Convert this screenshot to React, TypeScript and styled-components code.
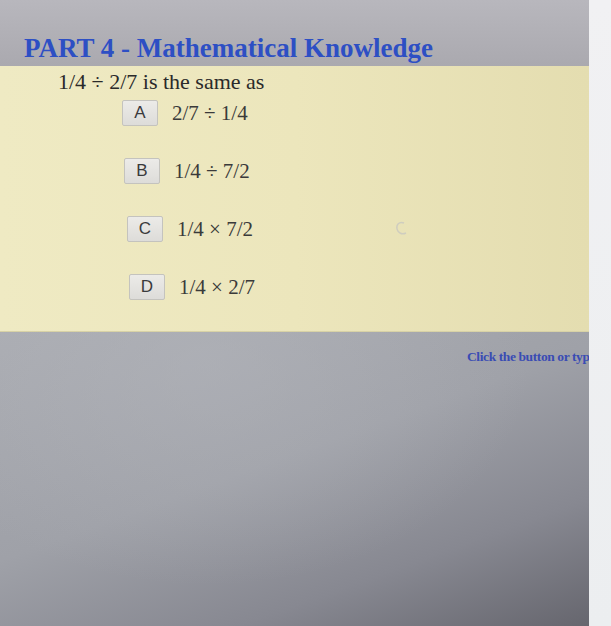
import React from "react";
import styled, { createGlobalStyle } from "styled-components";

const Global = createGlobalStyle`
  html, body { margin: 0; padding: 0; background: #eef0f2; }
  body { width: 611px; height: 626px; overflow: hidden; }
`;

const Page = styled.div`
  display: flex;
  width: 611px;
  height: 626px;
`;

const Main = styled.div`
  width: 589px;
  display: flex;
  flex-direction: column;
  overflow: hidden;
`;

const Side = styled.div`
  flex: 1;
  background: linear-gradient(180deg, #f1f1f3 0%, #eceef0 100%);
`;

const Header = styled.div`
  height: 66px;
  box-sizing: border-box;
  padding: 33px 0 0 24px;
  background: linear-gradient(180deg, #b8b7bd 0%, #aaa9af 100%);
`;

const Title = styled.h1`
  margin: 0;
  font-family: "Liberation Serif", "Times New Roman", serif;
  font-weight: bold;
  font-size: 27px;
  line-height: 30px;
  color: #2d4fc4;
  white-space: nowrap;
`;

const Panel = styled.div`
  height: 266px;
  box-sizing: border-box;
  padding: 3px 0 0 58px;
  background: linear-gradient(90deg, #efeac3 0%, #ece6bc 50%, #e4ddb0 100%);
  border-bottom: 1px solid #d8d2a6;
`;

const Question = styled.div`
  font-family: "Liberation Serif", "Times New Roman", serif;
  font-size: 22px;
  line-height: 26px;
  color: #2a2a2a;
  white-space: nowrap;
`;

const Options = styled.div`
  display: flex;
  flex-direction: column;
  gap: 32px;
  margin-top: 5px;
`;

const Row = styled.div<{ $indent: number }>`
  display: flex;
  align-items: center;
  gap: 14px;
  height: 26px;
  padding-left: ${(p) => p.$indent}px;
`;

const Letter = styled.div`
  width: 36px;
  height: 26px;
  box-sizing: border-box;
  display: flex;
  align-items: center;
  justify-content: center;
  font-family: "Liberation Sans", Arial, sans-serif;
  font-size: 17px;
  color: #3a3a3c;
  background: linear-gradient(180deg, #ecebe8 0%, #dddcd9 100%);
  border: 1px solid #c4c3be;
  border-radius: 2px;
`;

const Answer = styled.div`
  font-family: "Liberation Serif", "Times New Roman", serif;
  font-size: 21px;
  color: #3a3a3a;
  white-space: nowrap;
`;

const Cursor = styled.svg`
  position: absolute;
  left: 393px;
  top: 220px;
`;

const Lower = styled.div`
  flex: 1;
  box-sizing: border-box;
  padding: 17px 0 0 467px;
  background:
    radial-gradient(ellipse at 35% 10%, rgba(180, 182, 188, 0.5) 0%, rgba(180, 182, 188, 0) 60%),
    linear-gradient(160deg, #aaacb2 0%, #9fa1a8 45%, #878891 75%, #66666e 100%);
`;

const Hint = styled.div`
  font-family: "Liberation Serif", "Times New Roman", serif;
  font-size: 13.5px;
  font-weight: bold;
  color: #3a4cb4;
  white-space: nowrap;
  letter-spacing: -0.4px;
`;

const options = [
  { l: "A", t: "2/7 ÷ 1/4", i: 64 },
  { l: "B", t: "1/4 ÷ 7/2", i: 66 },
  { l: "C", t: "1/4 × 7/2", i: 69 },
  { l: "D", t: "1/4 × 2/7", i: 71 },
];

export default function App() {
  return (
    <>
      <Global />
      <Page>
        <Main>
          <Header>
            <Title>PART 4 - Mathematical Knowledge</Title>
          </Header>
          <Panel>
            <Question>1/4 ÷ 2/7 is the same as</Question>
            <Options>
              {options.map((o) => (
                <Row key={o.l} $indent={o.i}>
                  <Letter>{o.l}</Letter>
                  <Answer>{o.t}</Answer>
                </Row>
              ))}
            </Options>
          </Panel>
          <Lower>
            <Hint>Click the button or type</Hint>
          </Lower>
        </Main>
        <Side />
      </Page>
      <Cursor width="16" height="18" viewBox="0 0 16 18">
        <path d="M11 3 C6 1 3 5 4 9 C5 13 9 15 13 13" fill="none" stroke="#cfcdbf" strokeWidth="1.4" />
      </Cursor>
    </>
  );
}
